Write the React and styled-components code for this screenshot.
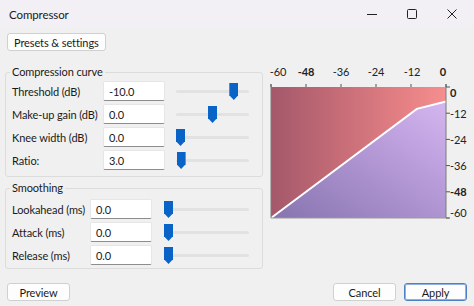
import React from "react";
import styled, { createGlobalStyle } from "styled-components";

const GlobalStyle = createGlobalStyle`
  html, body {
    margin: 0;
    padding: 0;
    background: #f0f0f0;
  }
  * {
    box-sizing: border-box;
  }
`;

const Window = styled.div`
  width: 474px;
  height: 306px;
  display: flex;
  flex-direction: column;
  background: #f0f0f0;
  font-family: Lato, "Noto Sans", sans-serif;
  font-size: 11px;
  letter-spacing: -0.1px;
  color: #1a1a1a;
  overflow: hidden;
`;

const TitleBar = styled.div`
  height: 28px;
  display: flex;
  align-items: center;
  padding-left: 9px;
  padding-right: 2px;
  background: #f2f0f4;
`;

const Title = styled.span`
  flex: 1;
  font-size: 11.5px;
`;

const WinButton = styled.div`
  width: 40px;
  height: 28px;
  display: flex;
  align-items: center;
  justify-content: center;
`;

const Toolbar = styled.div`
  padding: 5px 7px 9px;
  display: flex;
`;

const Button = styled.button`
  height: 18px;
  min-width: ${(p) => p.$w || 63}px;
  padding: 0 6px;
  background: #fdfdfd;
  border: 1px solid ${(p) => (p.$primary ? "#4f80c4" : "#d0d0d0")};
  box-shadow: ${(p) => (p.$primary ? "inset 0 0 0 1px #8fb0e0" : "none")};
  border-radius: 3px;
  font-family: inherit;
  font-size: 11px;
  letter-spacing: -0.1px;
  color: #1a1a1a;
  display: flex;
  align-items: center;
  justify-content: center;
`;

const Main = styled.div`
  display: flex;
  align-items: flex-start;
  gap: 2px;
`;

const LeftColumn = styled.div`
  width: 258px;
  margin-left: 5px;
  padding-top: 5px;
  display: flex;
  flex-direction: column;
  gap: 4px;
`;

const Group = styled.fieldset`
  margin: 0;
  min-width: 0;
  border: 1px solid #dcdcdc;
  border-radius: 3px;
  padding: ${(p) => p.$pad};
  display: grid;
  grid-template-columns: ${(p) => p.$cols};
  row-gap: ${(p) => p.$gap}px;
  align-items: center;
`;

const Legend = styled.legend`
  margin-left: -2px;
  padding: 0 2px;
  font-size: 11px;
  line-height: 14px;
`;

const Label = styled.span`
  white-space: nowrap;
`;

const Field = styled.div`
  height: 20px;
  background: #ffffff;
  border: 1px solid #e6e6e6;
  border-bottom: 1px solid #8d8d8d;
  border-radius: 2px;
  padding-left: 5px;
  display: flex;
  align-items: center;
`;

const SliderBox = styled.div`
  position: relative;
  height: 20px;
  margin-left: ${(p) => p.$ml}px;
`;

const Track = styled.div`
  position: absolute;
  left: 0;
  right: 0;
  top: 9px;
  height: 3px;
  background: #e2e2e2;
  border-radius: 2px;
`;

const Thumb = styled.div`
  position: absolute;
  top: 2px;
  width: 9px;
  height: 17px;
  margin-left: -4.5px;
  background: #0a64c8;
  clip-path: polygon(0 0, 100% 0, 100% 72%, 50% 100%, 0 72%);
`;

const Footer = styled.div`
  margin-top: auto;
  padding: 0 7px 5px;
  display: flex;
  gap: 8px;
`;

const Spacer = styled.div`
  flex: 1;
`;

function Slider({ ml, frac }) {
  return (
    <SliderBox $ml={ml}>
      <Track />
      <Thumb style={{ left: `calc(4.5px + (100% - 9px) * ${frac})` }} />
    </SliderBox>
  );
}

const curveRows = [
  { label: "Threshold (dB)", value: "-10.0", frac: 0.833 },
  { label: "Make-up gain (dB)", value: "0.0", frac: 0.5 },
  { label: "Knee width (dB)", value: "0.0", frac: 0 },
  { label: "Ratio:", value: "3.0", frac: 0.01 },
];

const smoothRows = [
  { label: "Lookahead (ms)", value: "0.0" },
  { label: "Attack (ms)", value: "0.0" },
  { label: "Release (ms)", value: "0.0" },
];

function Graph() {
  const x0 = 6;
  const x1 = 181;
  const y0 = 27;
  const y1 = 158;
  const mx = (db) => x0 + ((db + 60) / 60) * (x1 - x0);
  const my = (db) => y0 + (-db / 60) * (y1 - y0);
  const kx = mx(-10);
  const ky = my(-10);
  const ey = my(-10 + 10 / 3);
  const ticks = [-60, -48, -36, -24, -12, 0];
  const topLabelX = [13, 41, 76, 111, 147, 178];
  // right labels listed in tick order (-60 .. 0), clamped inside the plot height
  const rightLabelY = [153, 132, 106, 80, 54, 33];
  const bold = (v) => v === 0 || v === -48;

  return (
    <svg width="209" height="162" viewBox="0 0 209 162">
      <defs>
        <linearGradient id="red" x1="0" y1="0" x2="1" y2="0">
          <stop offset="0" stopColor="#a4586a" />
          <stop offset="0.7" stopColor="#e07d82" />
          <stop offset="1" stopColor="#f58e8e" />
        </linearGradient>
        <linearGradient id="purple" x1="0" y1="1" x2="1" y2="0">
          <stop offset="0" stopColor="#8674ae" />
          <stop offset="0.75" stopColor="#c2a4e2" />
          <stop offset="1" stopColor="#d4b6ef" />
        </linearGradient>
      </defs>
      <polygon
        points={`${x0},${y0} ${x1},${y0} ${x1},${ey} ${kx},${ky} ${x0},${y1}`}
        fill="url(#red)"
      />
      <polygon
        points={`${x0},${y1} ${kx},${ky} ${x1},${ey} ${x1},${y1}`}
        fill="url(#purple)"
      />
      <polyline
        points={`${x0},${y1} ${kx},${ky} ${x1},${ey}`}
        fill="none"
        stroke="#ffffff"
        strokeWidth="2"
      />
      <line x1={x0} y1={y0 - 3} x2={x0} y2={y1} stroke="#7a7a7a" strokeWidth="1" />
      <line x1={x1} y1={y0 - 3} x2={x1} y2={y1} stroke="#7a7a7a" strokeWidth="1" />
      <line x1={x0} y1={y1} x2={x1 + 3} y2={y1} stroke="#9a9a9a" strokeWidth="1" />
      {ticks.map((t, i) => (
        <g key={t}>
          <line x1={mx(t)} y1={y0 - 3} x2={mx(t)} y2={y0} stroke="#555" strokeWidth="1" />
          <line x1={x1} y1={my(t)} x2={x1 + 4} y2={my(t)} stroke="#555" strokeWidth="1" />
          <text
            x={topLabelX[i]}
            y="16"
            textAnchor="middle"
            fontFamily="Lato, 'Noto Sans', sans-serif"
            fontSize="11"
            fontWeight={bold(t) ? 700 : 400}
            fill="#222"
          >
            {t}
          </text>
          <text
            x="185"
            y={rightLabelY[i] + 4}
            fontFamily="Lato, 'Noto Sans', sans-serif"
            fontSize="11"
            fontWeight={bold(t) ? 700 : 400}
            fill="#222"
          >
            {t}
          </text>
        </g>
      ))}
    </svg>
  );
}

export default function App() {
  return (
    <>
      <GlobalStyle />
      <Window>
        <TitleBar>
          <Title>Compressor</Title>
          <WinButton>
            <svg width="12" height="12" viewBox="0 0 12 12">
              <line x1="1" y1="6.5" x2="11" y2="6.5" stroke="#222" strokeWidth="1" />
            </svg>
          </WinButton>
          <WinButton>
            <svg width="12" height="12" viewBox="0 0 12 12">
              <rect x="1.5" y="1.5" width="9" height="9" rx="1" fill="none" stroke="#222" strokeWidth="1" />
            </svg>
          </WinButton>
          <WinButton>
            <svg width="12" height="12" viewBox="0 0 12 12">
              <path d="M1.5 1.5 L10.5 10.5 M10.5 1.5 L1.5 10.5" stroke="#222" strokeWidth="1" />
            </svg>
          </WinButton>
        </TitleBar>
        <Toolbar>
          <Button $w={98}>Presets &amp; settings</Button>
        </Toolbar>
        <Main>
          <LeftColumn>
            <Group $pad="2px 13px 6px 6px" $cols="91px 62px 1fr" $gap={3}>
              <Legend>Compression curve</Legend>
              {curveRows.map((r) => (
                <React.Fragment key={r.label}>
                  <Label>{r.label}</Label>
                  <Field>{r.value}</Field>
                  <Slider ml={11} frac={r.frac} />
                </React.Fragment>
              ))}
            </Group>
            <Group $pad="4px 13px 3px 6px" $cols="78px 62px 1fr" $gap={3}>
              <Legend>Smoothing</Legend>
              {smoothRows.map((r) => (
                <React.Fragment key={r.label}>
                  <Label>{r.label}</Label>
                  <Field>{r.value}</Field>
                  <Slider ml={12} frac={0} />
                </React.Fragment>
              ))}
            </Group>
          </LeftColumn>
          <Graph />
        </Main>
        <Footer>
          <Button $w={63}>Preview</Button>
          <Spacer />
          <Button $w={63}>Cancel</Button>
          <Button $w={63} $primary>Apply</Button>
        </Footer>
      </Window>
    </>
  );
}
